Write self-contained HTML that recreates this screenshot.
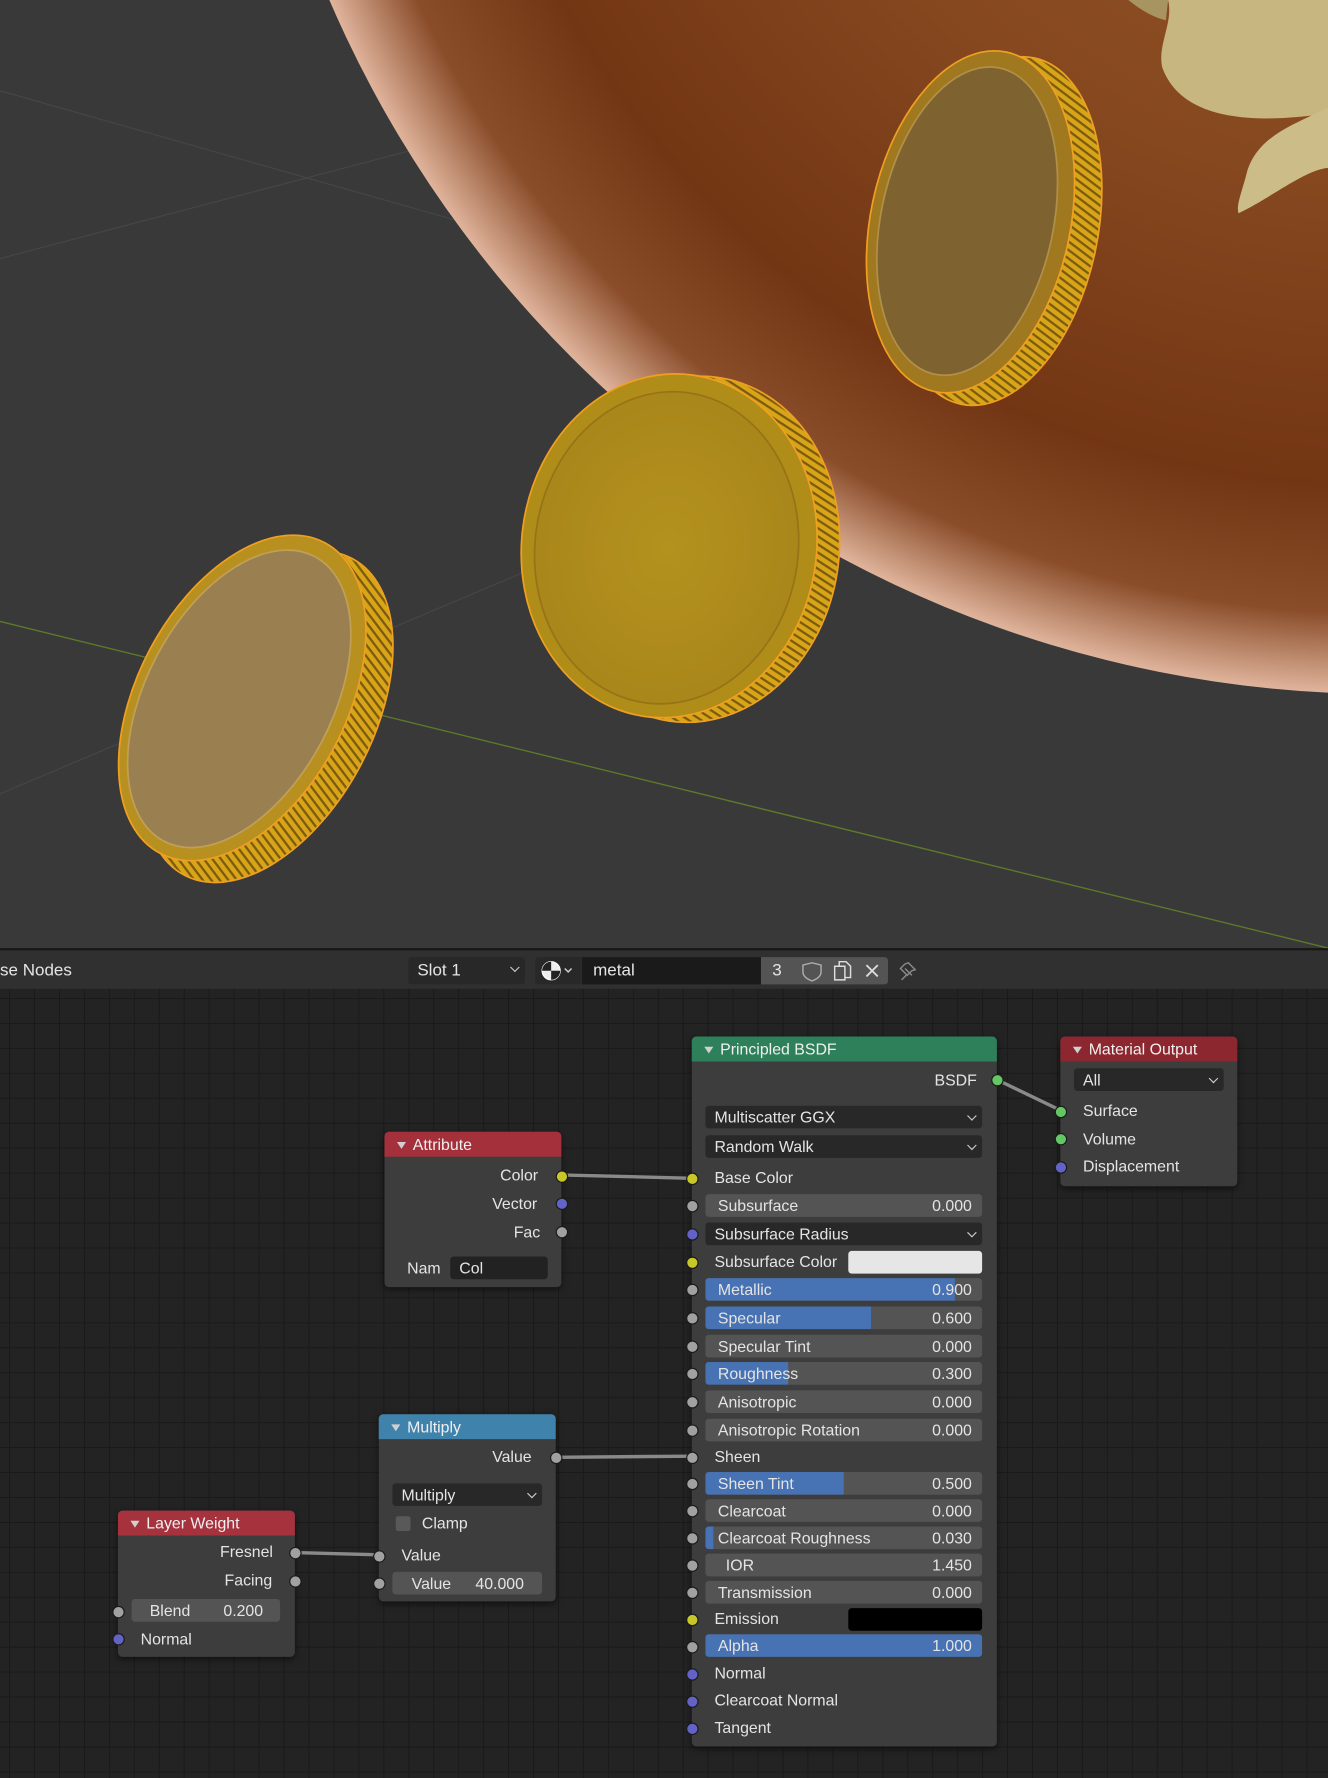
<!DOCTYPE html>
<html><head><meta charset="utf-8"><style>
html,body{margin:0;padding:0;width:1328px;height:1778px;overflow:hidden;background:#1d1d1d}
#w{position:absolute;left:0;top:0;width:1171px;height:1568px;transform:scale(1.134074);transform-origin:0 0;font-family:"Liberation Sans","DejaVu Sans",sans-serif;font-size:14px;color:#e4e4e4}
.a{position:absolute}
.ne{left:0;top:872px;width:1171px;height:696px;background-color:#232323;background-image:linear-gradient(#1a1a1a 1px,transparent 1px),linear-gradient(90deg,#1a1a1a 1px,transparent 1px);background-size:22px 22px;background-position:8px 8px}
.node{position:absolute;background:#3d3d3d;border-radius:4px;box-shadow:0 2px 6px rgba(0,0,0,.5)}
.hd{position:absolute;left:0;top:0;right:0;height:22px;border-radius:4px 4px 0 0;color:#f0f0f0;line-height:22px;padding-left:25px;box-sizing:border-box}
.hd:before{content:"";position:absolute;left:11px;top:9px;border-left:4px solid transparent;border-right:4px solid transparent;border-top:6px solid #d0d0d0}
.t{position:absolute;line-height:20px;white-space:nowrap}
.s{position:absolute;width:9px;height:9px;border-radius:50%;border:1px solid #1a1a1a;margin:-5.5px 0 0 -5.5px}
.g{background:#a1a1a1}.y{background:#c7c729}.p{background:#6363c7}.gr{background:#63c763}
.sl{position:absolute;height:20px;border-radius:3px;background:#545454;overflow:hidden;line-height:20px}
.sl .f{position:absolute;left:0;top:0;bottom:0;background:#4772b3}
.sl .l{position:absolute;left:11px}.sl .v{position:absolute;right:9px}
.dd{position:absolute;height:20px;border-radius:3px;background:#282828;line-height:20px;padding-left:8px;box-sizing:border-box}
.dd:after{content:"";position:absolute;right:6px;top:6px;width:5px;height:5px;border-right:1.5px solid #ccc;border-bottom:1.5px solid #ccc;transform:rotate(45deg)}
</style></head><body><div id="w">
<svg class="a" style="left:0;top:0" width="1171" height="838" viewBox="0 0 1171 838">
<defs>
<radialGradient id="sph" cx="1220" cy="-400" r="1012" gradientUnits="userSpaceOnUse">
<stop offset="0" stop-color="#9a5a2a"/><stop offset="0.55" stop-color="#86481f"/><stop offset="0.82" stop-color="#733614"/><stop offset="0.93" stop-color="#8a4d2a"/><stop offset="1" stop-color="#e0b49c"/></radialGradient>
<pattern id="rid" width="6" height="6" patternUnits="userSpaceOnUse" patternTransform="rotate(25)"><rect width="6" height="6" fill="#d8a418"/><rect width="6" height="2" fill="#7a5a10"/></pattern>
<radialGradient id="f1" cx="0.5" cy="0.5" r="0.6"><stop offset="0" stop-color="#b4921e"/><stop offset="1" stop-color="#a8841a"/></radialGradient>
</defs>
<rect width="1171" height="838" fill="#393939"/>
<g stroke="#464646" stroke-width="1"><line x1="0" y1="80" x2="440" y2="205"/><line x1="0" y1="228" x2="380" y2="128"/><line x1="0" y1="700" x2="520" y2="480"/></g>
<line x1="0" y1="548" x2="1171" y2="836" stroke="#5c7a2a" stroke-width="1.2"/>
<circle cx="1220" cy="-400" r="1012" fill="url(#sph)"/>
<path d="M995 0 L1030 0 C1035 20 1020 40 1025 60 C1040 100 1090 112 1171 100 L1171 0 Z" fill="#c8b680"/>
<path d="M1171 95 C1140 110 1110 120 1100 150 C1095 170 1090 180 1092 188 C1120 175 1150 150 1171 148Z" fill="#ccbc88"/>
<path d="M995 0 Q1012 14 1028 18 L1030 0Z" fill="#a89460"/>
<g transform="rotate(12 862 200)"><ellipse cx="880" cy="200" rx="88" ry="156" fill="url(#rid)" stroke="#f0a020" stroke-width="1.5"/>
<ellipse cx="855" cy="197" rx="88" ry="153" fill="#a07820" stroke="#f0a020" stroke-width="1.5"/>
<ellipse cx="852" cy="197" rx="76" ry="138" fill="#7e6230" stroke="#b09048" stroke-width="1.5"/></g>
<g transform="rotate(8 595 482)"><ellipse cx="612" cy="482" rx="128" ry="153" fill="url(#rid)" stroke="#f0a020" stroke-width="1.5"/>
<ellipse cx="590" cy="482" rx="130" ry="152" fill="#b08c18" stroke="#f0a020" stroke-width="1.5"/>
<ellipse cx="588" cy="484" rx="116" ry="138" fill="url(#f1)" stroke="#957418" stroke-width="1.5"/></g>
<g transform="rotate(28 218 620)"><ellipse cx="240" cy="622" rx="92" ry="158" fill="url(#rid)" stroke="#f0a020" stroke-width="1.5"/>
<ellipse cx="212" cy="618" rx="92" ry="155" fill="#b89020" stroke="#f0a020" stroke-width="1.5"/>
<ellipse cx="210" cy="620" rx="82" ry="142" fill="#9a8050" stroke="#c0a058" stroke-width="1.5"/></g>
</svg>
<div class="a" style="left:0;top:836px;width:1171px;height:2px;background:#181818"></div>
<div class="a" style="left:0;top:838px;width:1171px;height:34px;background:#303030"></div>
<div class="t" style="left:0;top:846px;font-size:15px">se Nodes</div>
<div class="dd" style="left:360px;top:844px;width:103px;height:24px;line-height:24px;font-size:15px">Slot 1</div>
<div class="a" style="left:472px;top:844px;width:40px;height:24px;background:#282828;border-radius:3px 0 0 3px"></div>
<svg class="a" style="left:476px;top:846px" width="32" height="20"><circle cx="10" cy="10" r="8" fill="#eee" stroke="#fff"/><path d="M10 2 A8 8 0 0 0 2 10 L10 10Z M10 10 L18 10 A8 8 0 0 1 10 18Z" fill="#222"/><path d="M22 8 l3 3 l3 -3" stroke="#ccc" fill="none" stroke-width="1.3"/></svg>
<div class="a" style="left:513px;top:844px;width:158px;height:24px;background:#1a1a1a"></div>
<div class="t" style="left:523px;top:846px;font-size:15px">metal</div>
<div class="a" style="left:671px;top:844px;width:112px;height:24px;background:#545454;border-radius:0 3px 3px 0"></div>
<div class="t" style="left:681px;top:846px;font-size:15px">3</div>
<svg class="a" style="left:700px;top:844px" width="110" height="24"><path d="M16 5 L24 7 L24 13 Q24 18 16 21 Q8 18 8 13 L8 7Z" fill="none" stroke="#aaa" stroke-width="1.3"/><path d="M36 8 h9 v12 h-9z M40 8 v-4 h6 l4 4 v10 h-5" fill="none" stroke="#ddd" stroke-width="1.3"/><path d="M64 7 l10 10 M74 7 l-10 10" stroke="#ddd" stroke-width="1.6"/><path d="M95 20 l5 -5 M98 10 l6 6 M101 5 l6 6 l-3 1 l-4 4 l-6 -6 l4 -4z" fill="none" stroke="#888" stroke-width="1.3"/></svg>
<div class="a ne"></div>
<svg class="a" style="left:0;top:0" width="1171" height="1568"><g stroke="#8a8a8a" stroke-width="3" fill="none"><path d="M879 952 L935 979"/><path d="M495 1036 L610 1039"/><path d="M490 1285 L610 1284"/><path d="M260 1369 L334 1371"/></g></svg>
<div class="node" style="left:610px;top:914px;width:269px;height:626px"><div class="hd" style="background:#2d8059">Principled BSDF</div></div>
<div class="t" style="left:824px;top:942px">BSDF</div><div class="s gr" style="left:879px;top:952px"></div>
<div class="dd" style="left:622px;top:975px;width:244px">Multiscatter GGX</div>
<div class="dd" style="left:622px;top:1001px;width:244px">Random Walk</div>
<div class="s y" style="left:610px;top:1039px"></div><div class="t" style="left:630px;top:1028px">Base Color</div>
<div class="s g" style="left:610px;top:1063px"></div><div class="sl" style="left:622px;top:1053px;width:244px"><span class="l">Subsurface</span><span class="v">0.000</span></div>
<div class="s p" style="left:610px;top:1088px"></div><div class="dd" style="left:622px;top:1078px;width:244px">Subsurface Radius</div>
<div class="s y" style="left:610px;top:1113px"></div><div class="t" style="left:630px;top:1102px">Subsurface Color</div><div class="a" style="left:748px;top:1103px;width:118px;height:20px;background:#e6e6e6;border-radius:3px"></div>
<div class="s g" style="left:610px;top:1137px"></div><div class="sl" style="left:622px;top:1127px;width:244px"><div class="f" style="width:90%"></div><span class="l">Metallic</span><span class="v">0.900</span></div>
<div class="s g" style="left:610px;top:1162px"></div><div class="sl" style="left:622px;top:1152px;width:244px"><div class="f" style="width:60%"></div><span class="l">Specular</span><span class="v">0.600</span></div>
<div class="s g" style="left:610px;top:1187px"></div><div class="sl" style="left:622px;top:1177px;width:244px"><span class="l">Specular Tint</span><span class="v">0.000</span></div>
<div class="s g" style="left:610px;top:1211px"></div><div class="sl" style="left:622px;top:1201px;width:244px"><div class="f" style="width:30%"></div><span class="l">Roughness</span><span class="v">0.300</span></div>
<div class="s g" style="left:610px;top:1236px"></div><div class="sl" style="left:622px;top:1226px;width:244px"><span class="l">Anisotropic</span><span class="v">0.000</span></div>
<div class="s g" style="left:610px;top:1261px"></div><div class="sl" style="left:622px;top:1251px;width:244px"><span class="l">Anisotropic Rotation</span><span class="v">0.000</span></div>
<div class="s g" style="left:610px;top:1285px"></div><div class="t" style="left:630px;top:1274px">Sheen</div>
<div class="s g" style="left:610px;top:1308px"></div><div class="sl" style="left:622px;top:1298px;width:244px"><div class="f" style="width:50%"></div><span class="l">Sheen Tint</span><span class="v">0.500</span></div>
<div class="s g" style="left:610px;top:1332px"></div><div class="sl" style="left:622px;top:1322px;width:244px"><span class="l">Clearcoat</span><span class="v">0.000</span></div>
<div class="s g" style="left:610px;top:1356px"></div><div class="sl" style="left:622px;top:1346px;width:244px"><div class="f" style="width:3%"></div><span class="l">Clearcoat Roughness</span><span class="v">0.030</span></div>
<div class="s g" style="left:610px;top:1380px"></div><div class="sl" style="left:622px;top:1370px;width:244px"><span class="l" style="left:18px">IOR</span><span class="v">1.450</span></div>
<div class="s g" style="left:610px;top:1404px"></div><div class="sl" style="left:622px;top:1394px;width:244px"><span class="l">Transmission</span><span class="v">0.000</span></div>
<div class="s y" style="left:610px;top:1428px"></div><div class="t" style="left:630px;top:1417px">Emission</div><div class="a" style="left:748px;top:1418px;width:118px;height:20px;background:#000;border-radius:3px"></div>
<div class="s g" style="left:610px;top:1452px"></div><div class="sl" style="left:622px;top:1441px;width:244px"><div class="f" style="width:100%"></div><span class="l">Alpha</span><span class="v">1.000</span></div>
<div class="s p" style="left:610px;top:1476px"></div><div class="t" style="left:630px;top:1465px">Normal</div>
<div class="s p" style="left:610px;top:1500px"></div><div class="t" style="left:630px;top:1489px">Clearcoat Normal</div>
<div class="s p" style="left:610px;top:1524px"></div><div class="t" style="left:630px;top:1513px">Tangent</div>
<div class="node" style="left:935px;top:914px;width:156px;height:132px"><div class="hd" style="background:#8c2730">Material Output</div></div>
<div class="dd" style="left:947px;top:942px;width:132px">All</div>
<div class="s gr" style="left:935px;top:980px"></div><div class="t" style="left:955px;top:969px">Surface</div>
<div class="s gr" style="left:935px;top:1004px"></div><div class="t" style="left:955px;top:994px">Volume</div>
<div class="s p" style="left:935px;top:1029px"></div><div class="t" style="left:955px;top:1018px">Displacement</div>
<div class="node" style="left:339px;top:998px;width:156px;height:137px"><div class="hd" style="background:#a3303a">Attribute</div></div>
<div class="t" style="left:441px;top:1026px">Color</div><div class="s y" style="left:495px;top:1037px"></div>
<div class="t" style="left:434px;top:1051px">Vector</div><div class="s p" style="left:495px;top:1061px"></div>
<div class="t" style="left:453px;top:1076px">Fac</div><div class="s g" style="left:495px;top:1086px"></div>
<div class="t" style="left:359px;top:1108px">Nam</div><div class="a" style="left:397px;top:1108px;width:86px;height:20px;background:#222;border-radius:3px"></div><div class="t" style="left:405px;top:1108px">Col</div>
<div class="node" style="left:334px;top:1247px;width:156px;height:165px"><div class="hd" style="background:#3f83ad">Multiply</div></div>
<div class="t" style="left:434px;top:1274px">Value</div><div class="s g" style="left:490px;top:1285px"></div>
<div class="dd" style="left:346px;top:1308px;width:132px">Multiply</div>
<div class="a" style="left:349px;top:1337px;width:13px;height:13px;background:#595959;border-radius:2px"></div><div class="t" style="left:372px;top:1333px">Clamp</div>
<div class="s g" style="left:334px;top:1372px"></div><div class="t" style="left:354px;top:1361px">Value</div>
<div class="s g" style="left:334px;top:1396px"></div><div class="sl" style="left:346px;top:1386px;width:132px"><span class="l" style="left:17px">Value</span><span class="v" style="right:16px">40.000</span></div>
<div class="node" style="left:104px;top:1332px;width:156px;height:129px"><div class="hd" style="background:#a6323e">Layer Weight</div></div>
<div class="t" style="left:194px;top:1358px">Fresnel</div><div class="s g" style="left:260px;top:1369px"></div>
<div class="t" style="left:198px;top:1383px">Facing</div><div class="s g" style="left:260px;top:1394px"></div>
<div class="s g" style="left:104px;top:1421px"></div><div class="sl" style="left:116px;top:1410px;width:131px"><span class="l" style="left:16px">Blend</span><span class="v" style="right:15px">0.200</span></div>
<div class="s p" style="left:104px;top:1445px"></div><div class="t" style="left:124px;top:1435px">Normal</div>
</div></body></html>
